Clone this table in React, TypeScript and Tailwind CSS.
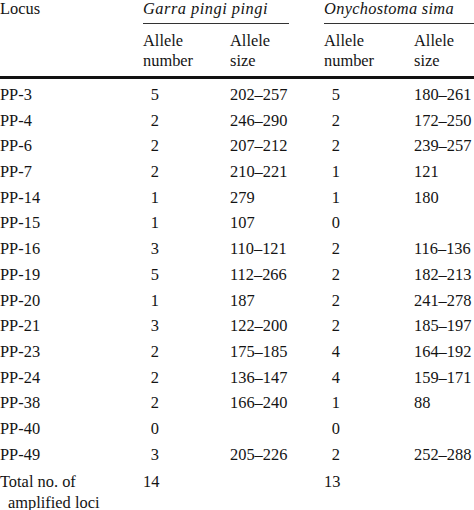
import React from "react";

const rows: [string, string, string, string, string][] = [
  ["PP-3", "5", "202–257", "5", "180–261"],
  ["PP-4", "2", "246–290", "2", "172–250"],
  ["PP-6", "2", "207–212", "2", "239–257"],
  ["PP-7", "2", "210–221", "1", "121"],
  ["PP-14", "1", "279", "1", "180"],
  ["PP-15", "1", "107", "0", ""],
  ["PP-16", "3", "110–121", "2", "116–136"],
  ["PP-19", "5", "112–266", "2", "182–213"],
  ["PP-20", "1", "187", "2", "241–278"],
  ["PP-21", "3", "122–200", "2", "185–197"],
  ["PP-23", "2", "175–185", "4", "164–192"],
  ["PP-24", "2", "136–147", "4", "159–171"],
  ["PP-38", "2", "166–240", "1", "88"],
  ["PP-40", "0", "", "0", ""],
  ["PP-49", "3", "205–226", "2", "252–288"],
];

export default function App() {
  return (
    <div
      className="w-[474px] h-[510px] overflow-hidden bg-white text-[#141414] text-[16.4px]"
      style={{ fontFamily: '"Liberation Serif", "Times New Roman", serif' }}
    >
      <div className="w-[540px]">
        {/* header row 1 */}
        <div className="flex h-[24px] leading-[18px]">
          <div className="w-[143px] shrink-0">Locus</div>
          <div className="w-[146px] shrink-0 border-b border-[#333] italic tracking-[0.5px]">
            Garra pingi pingi
          </div>
          <div className="w-[35px] shrink-0" />
          <div className="w-[200px] shrink-0 border-b border-[#333] italic tracking-[0.3px]">
            Onychostoma sima
          </div>
        </div>
        {/* header row 2 */}
        <div className="flex pt-[6.5px] pb-[5.5px] leading-[20px] border-b-[3px] border-[#111]">
          <div className="w-[143px] shrink-0" />
          <div className="w-[87px] shrink-0">
            Allele
            <br />
            number
          </div>
          <div className="w-[94px] shrink-0">
            Allele
            <br />
            size
          </div>
          <div className="w-[90px] shrink-0">
            Allele
            <br />
            number
          </div>
          <div className="w-[100px] shrink-0">
            Allele
            <br />
            size
          </div>
        </div>
        {/* data rows */}
        <div className="pt-[3px]">
          {rows.map((r) => (
            <div key={r[0]} className="flex h-[25.7px] leading-[25.7px]">
              <div className="w-[143px] shrink-0">{r[0]}</div>
              <div className="w-[87px] shrink-0">
                <div className="w-[16px] text-right">{r[1]}</div>
              </div>
              <div className="w-[94px] shrink-0 whitespace-nowrap">{r[2]}</div>
              <div className="w-[90px] shrink-0">
                <div className="w-[16px] text-right">{r[3]}</div>
              </div>
              <div className="w-[100px] shrink-0 whitespace-nowrap">{r[4]}</div>
            </div>
          ))}
          <div className="flex pt-[3.5px] leading-[21px]">
            <div className="w-[143px] shrink-0">
              <div className="whitespace-nowrap">Total no. of</div>
              <div className="pl-[8px] whitespace-nowrap">amplified loci</div>
            </div>
            <div className="w-[87px] shrink-0">
              <div className="w-[16px] text-right">14</div>
            </div>
            <div className="w-[94px] shrink-0" />
            <div className="w-[90px] shrink-0">
              <div className="w-[16px] text-right">13</div>
            </div>
            <div className="w-[100px] shrink-0" />
          </div>
        </div>
      </div>
    </div>
  );
}
